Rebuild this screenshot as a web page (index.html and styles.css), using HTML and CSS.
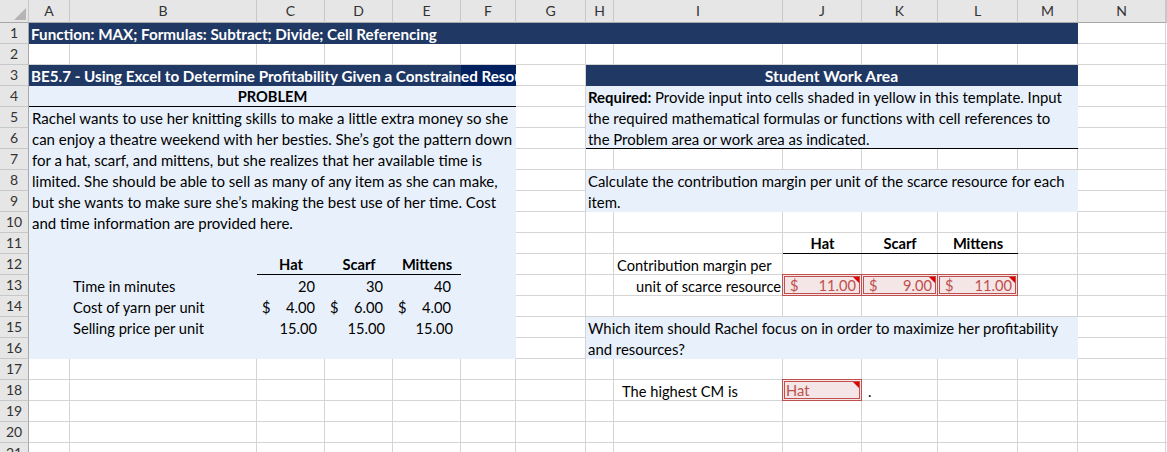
FILE: index.html
```html
<!DOCTYPE html>
<html lang="en">
<head>
<meta charset="utf-8">
<title>BE5.7</title>
<link rel="stylesheet" href="styles.css">
</head>
<body>
<div class="sheet">
  <div class="ch corner"><svg width="12" height="12" viewBox="0 0 12 12"><polygon points="12,0 12,12 0,12" fill="#b5b5b5"/></svg></div>
  <div class="ch">A</div><div class="ch">B</div><div class="ch">C</div><div class="ch">D</div><div class="ch">E</div><div class="ch">F</div><div class="ch">G</div><div class="ch">H</div><div class="ch">I</div><div class="ch">J</div><div class="ch">K</div><div class="ch">L</div><div class="ch">M</div><div class="ch">N</div><div class="ch"></div>

  <div class="rh">1</div><div class="rh">2</div><div class="rh">3</div><div class="rh">4</div><div class="rh">5</div><div class="rh">6</div><div class="rh">7</div><div class="rh">8</div><div class="rh">9</div><div class="rh">10</div><div class="rh">11</div><div class="rh">12</div><div class="rh">13</div><div class="rh">14</div><div class="rh">15</div><div class="rh">16</div><div class="rh">17</div><div class="rh">18</div><div class="rh">19</div><div class="rh">20</div><div class="rh">21</div>

  <div class="navy banner1">Function: MAX; Formulas: Subtract; Divide; Cell Referencing</div>
  <div class="navy banner3l">BE5.7 - Using Excel to Determine Profitability Given a Constrained Resource</div>
  <div class="navy banner3r">Student Work Area</div>

  <div class="blue probbg"></div>
  <div class="txt probhead">PROBLEM</div>
  <div class="txt probtext">Rachel wants to use her knitting skills to make a little extra money so she<br>can enjoy a theatre weekend with her besties. She’s got the pattern down<br>for a hat, scarf, and mittens, but she realizes that her available time is<br>limited. She should be able to sell as many of any item as she can make,<br>but she wants to make sure she’s making the best use of her time. Cost<br>and time information are provided here.</div>

  <div class="heads lheads"><span>Hat</span><span>Scarf</span><span>Mittens</span></div>
  <div class="txt labels"><div>Time in minutes</div><div>Cost of yarn per unit</div><div>Selling price per unit</div></div>
  <div class="nums">
    <div class="n"><span></span><span>20</span></div>
    <div class="n"><span></span><span>30</span></div>
    <div class="n"><span></span><span>40</span></div>
    <div class="n"><span>$</span><span>4.00</span></div>
    <div class="n"><span>$</span><span>6.00</span></div>
    <div class="n"><span>$</span><span>4.00</span></div>
    <div class="n n15"><span></span><span>15.00</span></div>
    <div class="n n15"><span></span><span>15.00</span></div>
    <div class="n n15"><span></span><span>15.00</span></div>
  </div>

  <div class="blue txt wide req"><b>Required:</b> Provide input into cells shaded in yellow in this template. Input<br>the required mathematical formulas or functions with cell references to<br>the Problem area or work area as indicated.</div>
  <div class="blue txt wide calc">Calculate the contribution margin per unit of the scarce resource for each<br>item.</div>

  <div class="heads rheads"><span>Hat</span><span>Scarf</span><span>Mittens</span></div>
  <div class="txt cm1">Contribution margin per</div>
  <div class="txt cm2">unit of scarce resource</div>
  <div class="inp inj"><span>$</span><span>11.00</span></div>
  <div class="inp ink"><span>$</span><span>9.00</span></div>
  <div class="inp inl"><span>$</span><span>11.00</span></div>

  <div class="blue txt wide which">Which item should Rachel focus on in order to maximize her profitability<br>and resources?</div>
  <div class="txt highest">The highest CM is</div>
  <div class="inp ans"><span>Hat</span></div>
  <div class="txt dot">.</div>
</div>
</body>
</html>
```

FILE: styles.css
```css
* { box-sizing: border-box; margin: 0; padding: 0; }
html, body { margin: 0; background: #fff; }
body {
  font-family: Lato, "Liberation Sans", sans-serif;
  font-size: 14.67px;
  color: #000;
  overflow: hidden;
}
.sheet {
  display: grid;
  grid-template-columns: 29px 41px 187px 68px 68px 68px 55px 70px 28px 169px 79px 76px 80px 60px 88px 1fr;
  grid-template-rows: 23px repeat(21, 21px);
  width: 1167px;
  height: 452px;
  overflow: hidden;
  background:
    linear-gradient(#d4d4d4, #d4d4d4) 69px 0 / 1px 100% no-repeat,
    linear-gradient(#d4d4d4, #d4d4d4) 256px 0 / 1px 100% no-repeat,
    linear-gradient(#d4d4d4, #d4d4d4) 324px 0 / 1px 100% no-repeat,
    linear-gradient(#d4d4d4, #d4d4d4) 392px 0 / 1px 100% no-repeat,
    linear-gradient(#d4d4d4, #d4d4d4) 460px 0 / 1px 100% no-repeat,
    linear-gradient(#d4d4d4, #d4d4d4) 515px 0 / 1px 100% no-repeat,
    linear-gradient(#d4d4d4, #d4d4d4) 585px 0 / 1px 100% no-repeat,
    linear-gradient(#d4d4d4, #d4d4d4) 613px 0 / 1px 100% no-repeat,
    linear-gradient(#d4d4d4, #d4d4d4) 782px 0 / 1px 100% no-repeat,
    linear-gradient(#d4d4d4, #d4d4d4) 861px 0 / 1px 100% no-repeat,
    linear-gradient(#d4d4d4, #d4d4d4) 937px 0 / 1px 100% no-repeat,
    linear-gradient(#d4d4d4, #d4d4d4) 1017px 0 / 1px 100% no-repeat,
    linear-gradient(#d4d4d4, #d4d4d4) 1077px 0 / 1px 100% no-repeat,
    linear-gradient(#d4d4d4, #d4d4d4) 1165px 0 / 1px 100% no-repeat,
    linear-gradient(to top, #d4d4d4 1px, transparent 1px) 0 23px / 100% 21px,
    #fff;
}

/* headers */
.ch {
  background: #e6e6e6;
  border-right: 1px solid #c8c8c8;
  border-bottom: 1px solid #a8a8a8;
  text-align: center;
  line-height: 22px;
  color: #333;
  font-size: 14px;
}
.corner {
  display: flex;
  align-items: flex-end;
  justify-content: flex-end;
  padding: 0 2px 2px 0;
}
.corner svg { display: block; }
.rh {
  grid-column: 1;
  background: #e6e6e6;
  border-right: 1px solid #a8a8a8;
  border-bottom: 1px solid #c8c8c8;
  text-align: center;
  line-height: 20px;
  color: #333;
  font-size: 14px;
}

/* banners */
.navy {
  background: #1f3864;
  color: #fff;
  font-weight: bold;
  font-size: 15.2px;
  padding: 1px 3px 0 2px;
  line-height: 20px;
  white-space: nowrap;
  overflow: hidden;
}
.banner1 { grid-area: 2 / 2 / 3 / 15; }
.banner3l {
  grid-area: 4 / 2 / 5 / 8;
  background: linear-gradient(to right, #1f3864 432px, #002060 432px);
}
.banner3r { grid-area: 4 / 9 / 5 / 15; text-align: center; font-size: 15.7px; }

.blue { background: #e8f1fb; }
.txt {
  padding: 1px 3px 0;
  line-height: 21px;
  white-space: nowrap;
}
.wide { font-size: 14.9px; }

/* problem area */
.probbg { grid-area: 5 / 2 / 18 / 8; }
.probhead {
  grid-area: 5 / 2 / 6 / 8;
  text-align: center;
  font-weight: bold;
  line-height: 19px;
  border-bottom: 1px solid #000;
}
.probtext { grid-area: 6 / 2 / 12 / 8; font-size: 15px; }

.heads {
  display: grid;
  font-weight: bold;
  text-align: center;
  line-height: 19px;
  padding-top: 1px;
  border-bottom: 1px solid #000;
}
.lheads { grid-area: 13 / 4 / 14 / 7; grid-template-columns: repeat(3, 68px); }
.rheads { grid-area: 12 / 11 / 13 / 14; grid-template-columns: 79px 76px 80px; }

.labels { grid-area: 14 / 3 / 17 / 4; }
.nums {
  grid-area: 14 / 4 / 17 / 7;
  display: grid;
  grid-template-columns: repeat(3, 68px);
  grid-auto-rows: 21px;
  line-height: 21px;
  padding-top: 1px;
}
.n {
  display: flex;
  justify-content: space-between;
  padding: 0 10px 0 5px;
}
.n15 { padding-right: 8px; }

/* work area */
.req {
  grid-area: 5 / 9 / 8 / 15;
  border-bottom: 1px solid #000;
  line-height: 21px;
  padding-left: 2px;
}
.calc { grid-area: 9 / 9 / 11 / 15; padding-left: 2px; }
.which { grid-area: 16 / 9 / 18 / 15; padding-left: 2px; }

.cm1 { grid-area: 13 / 10 / 14 / 11; }
.cm2 { grid-area: 14 / 10 / 15 / 11; text-align: right; padding-right: 2px; }
.highest { grid-area: 19 / 10 / 20 / 11; padding-left: 8px; }
.dot { grid-area: 19 / 12 / 20 / 13; padding-left: 6px; }

.inp {
  position: relative;
  margin: -1px 0 0 -1px;
  border: 3px double #c0504d;
  background: #f4e6e6;
  color: #c0504d;
  display: flex;
  justify-content: space-between;
  padding: 1px 3px 0 5px;
  line-height: 16px;
}
.inp::after {
  content: "";
  position: absolute;
  top: 0;
  right: 0;
  border-top: 6px solid #e00000;
  border-left: 6px solid transparent;
}
.inj { grid-area: 14 / 11 / 15 / 12; }
.ink { grid-area: 14 / 12 / 15 / 13; }
.inl { grid-area: 14 / 13 / 15 / 14; }
.ans { grid-area: 19 / 11 / 20 / 12; padding-left: 1px; }
```
